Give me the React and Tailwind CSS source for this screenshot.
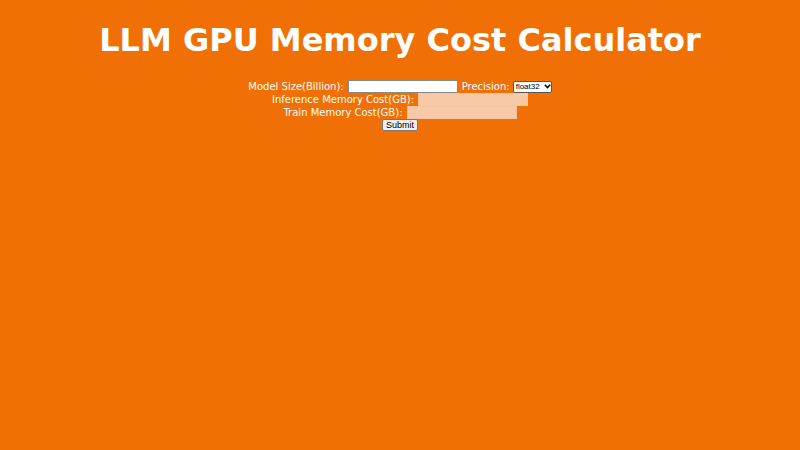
import React, { useState } from 'react';

const App = () => {
  const [size, setSize] = useState('');
  const [precision, setPrecision] = useState('float32');

  return (
    <div className="min-h-screen w-full bg-[#f07005] text-white font-['DejaVu_Sans',sans-serif]">
      <h1 className="pt-[21px] text-center text-[32px] font-bold leading-[38px]">
        LLM GPU Memory Cost Calculator
      </h1>
      <form
        className="mt-[21px] flex flex-col items-center text-[10px] leading-[13px]"
        onSubmit={(e) => e.preventDefault()}
      >
        <div className="flex items-center">
          <label>Model Size(Billion): </label>
          <input
            value={size}
            onChange={(e) => setSize(e.target.value)}
            className="ml-[4px] h-[13px] w-[110px] border border-[#888] bg-white text-black text-[10px]"
          />
          <label className="ml-[4px]">Precision: </label>
          <div className="ml-[3px] flex h-[12px] w-[39px] items-center rounded-[2px] border border-[#555] bg-white text-black">
            <select
              value={precision}
              onChange={(e) => setPrecision(e.target.value)}
              className="h-full w-[30px] appearance-none bg-transparent pl-[2px] text-[8px] leading-[10px] font-['Liberation_Sans',sans-serif] outline-none"
            >
              <option value="float32">float32</option>
              <option value="float16">float16</option>
              <option value="int8">int8</option>
              <option value="int4">int4</option>
            </select>
            <svg width="7" height="5" viewBox="0 0 7 5" className="pointer-events-none">
              <path d="M0.8 0.8 L3.5 3.6 L6.2 0.8" fill="none" stroke="#000" strokeWidth="1.5" />
            </svg>
          </div>
        </div>
        <div className="flex items-center">
          <label>Inference Memory Cost(GB): </label>
          <input
            disabled
            className="ml-[4px] h-[13px] w-[110px] border border-[#f5c4a0] bg-[#f7c9a6]"
          />
        </div>
        <div className="flex items-center">
          <label>Train Memory Cost(GB): </label>
          <input
            disabled
            className="ml-[4px] h-[13px] w-[110px] border border-[#f5c4a0] bg-[#f7c9a6]"
          />
        </div>
        <button
          type="submit"
          className="h-[12px] px-[3px] border border-[#777] rounded-[2px] bg-[#efefef] text-black text-[9px] leading-[10px] font-['Liberation_Sans',sans-serif]"
        >
          Submit
        </button>
      </form>
    </div>
  );
};

export default App;
